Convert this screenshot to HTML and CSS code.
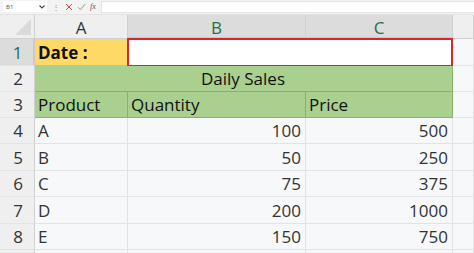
FILE: index.html
```html
<!DOCTYPE html>
<html lang="en">
<head>
<meta charset="UTF-8" />
<title>Daily Sales</title>
<link rel="stylesheet" href="styles.css">
</head>
<body>

<!-- FORMULA BAR -->
<div class="formula-bar">
  <div class="name-box">
    <span>B1</span>
    <svg class="chev" width="6" height="4" viewBox="0 0 6 4"><path d="M0.5 0.5 L3 3 L5.5 0.5" fill="none" stroke="#444" stroke-width="1.1"/></svg>
  </div>
  <span class="dots">&#8942;</span>
  <svg class="fb-icon" width="8" height="8" viewBox="0 0 8 8"><path d="M1 1 L7 7 M7 1 L1 7" stroke="#e0474c" stroke-width="1"/></svg>
  <svg class="fb-icon" width="9" height="8" viewBox="0 0 9 8"><path d="M1 4.2 L3.4 6.6 L8 1.2" fill="none" stroke="#6bb26f" stroke-width="1"/></svg>
  <span class="fx">fx</span>
  <div class="formula-input"></div>
</div>

<!-- SHEET -->
<div class="sheet">
  <div class="corner"><span class="tri"></span></div>
  <div class="col-head">A</div>
  <div class="col-head sel">B</div>
  <div class="col-head sel">C</div>
  <div class="col-head"></div>

  <div class="row-head sel">1</div>
  <div class="cell date">Date :</div>
  <div class="cell picked"></div>
  <div class="cell"></div>

  <div class="row-head">2</div>
  <div class="cell title">Daily Sales</div>
  <div class="cell"></div>

  <div class="row-head">3</div>
  <div class="cell head">Product</div>
  <div class="cell head">Quantity</div>
  <div class="cell head">Price</div>
  <div class="cell"></div>

  <div class="row-head">4</div>
  <div class="cell">A</div>
  <div class="cell num">100</div>
  <div class="cell num">500</div>
  <div class="cell"></div>

  <div class="row-head">5</div>
  <div class="cell">B</div>
  <div class="cell num">50</div>
  <div class="cell num">250</div>
  <div class="cell"></div>

  <div class="row-head">6</div>
  <div class="cell">C</div>
  <div class="cell num">75</div>
  <div class="cell num">375</div>
  <div class="cell"></div>

  <div class="row-head">7</div>
  <div class="cell">D</div>
  <div class="cell num">200</div>
  <div class="cell num">1000</div>
  <div class="cell"></div>

  <div class="row-head">8</div>
  <div class="cell">E</div>
  <div class="cell num">150</div>
  <div class="cell num">750</div>
  <div class="cell"></div>

  <div class="row-head"></div>
  <div class="cell"></div>
  <div class="cell"></div>
  <div class="cell"></div>
  <div class="cell"></div>
</div>

</body>
</html>
```

FILE: styles.css
```css
/* Reset */
*, *::before, *::after {
  box-sizing: border-box;
}
body {
  margin: 0;
  width: 474px;
  height: 253px;
  overflow: hidden;
  background: #f7f8f9;
  font-family: 'Open Sans', 'Noto Sans', sans-serif;
  color: #222;
}

:root {
  --grid: #e2e3e5;
  --head: #efefef;
  --head-sel: #dcdcdc;
  --head-line: #d0d0d0;
  --sel-text: #217346;
  --green: #a9d08e;
  --green-line: #86b26a;
  --gold: #ffd966;
  --red: #d9262e;
}

/* Formula bar */
.formula-bar {
  height: 15px;
  display: flex;
  align-items: center;
  gap: 4px;
  padding: 0 0 1px 3px;
  background: #f3f3f3;
  border-bottom: 1px solid #e3e3e3;
}
.name-box {
  width: 44px;
  height: 11px;
  display: flex;
  align-items: center;
  justify-content: space-between;
  padding: 0 2px 0 3px;
  background: white;
  font-size: 6px;
  color: #555;
}
.dots {
  font-size: 8px;
  color: #888;
  margin: 0 1px;
}
.fb-icon {
  display: block;
}
.fx {
  font-family: 'Liberation Serif', serif;
  font-style: italic;
  font-size: 8px;
  color: #555;
  margin-right: 1px;
}
.formula-input {
  flex: 1;
  height: 12px;
  background: white;
  border: 1px solid #e4e4e4;
  border-right: none;
}

/* Sheet grid */
.sheet {
  display: grid;
  grid-template-columns: 35px 93px 178px 147px 1fr;
  grid-template-rows: 24px 27px 26px 26px 26px 27px 26px 27px 26px 8px;
  font-size: 17px;
}
.corner {
  background: var(--head);
  border-right: 1px solid var(--head-line);
  border-bottom: 1px solid var(--head-line);
  position: relative;
}
.tri {
  position: absolute;
  right: 3px;
  bottom: 3px;
  width: 0;
  height: 0;
  border-left: 16px solid transparent;
  border-bottom: 16px solid #dadada;
}
.col-head {
  background: var(--head);
  border-right: 1px solid var(--head-line);
  border-bottom: 1px solid var(--head-line);
  display: flex;
  align-items: center;
  justify-content: center;
  color: #333;
  padding-top: 2px;
}
.col-head.sel {
  background: var(--head-sel);
  color: var(--sel-text);
  border-bottom: 2px solid #c9c9c9;
}
.row-head {
  background: var(--head);
  border-right: 1px solid var(--head-line);
  border-bottom: 1px solid var(--grid);
  display: flex;
  align-items: center;
  justify-content: center;
  color: #333;
  padding-left: 2px;
}
.row-head.sel {
  background: var(--head-sel);
  color: var(--sel-text);
  border-right: 2px solid #c9c9c9;
}
.cell {
  border-right: 1px solid var(--grid);
  border-bottom: 1px solid var(--grid);
  display: flex;
  align-items: center;
  padding: 0 4px 0 3px;
  white-space: nowrap;
  color: #333;
}
.cell.num {
  justify-content: flex-end;
}
.cell.date {
  background: var(--gold);
  font-weight: 700;
  color: #111;
  border-right-color: #d9b850;
  border-bottom-color: #b7c98a;
}
.cell.picked {
  grid-column: span 2;
  background: white;
  box-shadow: inset 0 0 0 2px var(--red);
  border: none;
  margin: -1px 0 -1px -1px;
}
.cell.title {
  grid-column: span 3;
  justify-content: center;
  background: var(--green);
  color: #111;
  border-right-color: var(--green-line);
  border-bottom-color: var(--green-line);
}
.cell.head {
  background: var(--green);
  color: #111;
  border-right-color: var(--green-line);
  border-bottom-color: var(--green-line);
}
```
